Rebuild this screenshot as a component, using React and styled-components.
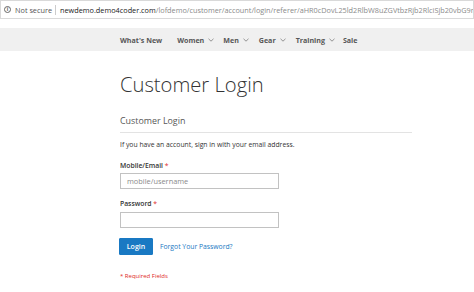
import React from "react";
import styled, { createGlobalStyle } from "styled-components";

const Global = createGlobalStyle`
  html, body { margin: 0; padding: 0; background: #fff; }
  body { font-family: "Open Sans", "Liberation Sans", sans-serif; color: #333; }
  * { box-sizing: border-box; }
`;

const AddressBar = styled.div`
  height: 19px;
  border: 1px solid #d9d9d9;
  display: flex;
  align-items: center;
  padding: 0 3px;
  font-size: 7.3px;
  white-space: nowrap;
  overflow: hidden;
  color: #555;
`;

const InfoIcon = styled.span`
  width: 7px;
  height: 7px;
  border: 1px solid #666;
  border-radius: 50%;
  font-size: 5px;
  line-height: 5px;
  text-align: center;
  font-weight: 700;
  color: #555;
  margin-right: 4px;
  flex: none;
`;

const Sep = styled.span`
  width: 1px;
  height: 10px;
  background: #ccc;
  margin: 0 4px 0 3px;
  flex: none;
`;

const Domain = styled.span`
  color: #222;
`;
const Path = styled.span`
  color: #8a8a8a;
`;

const Nav = styled.nav`
  margin-top: 9px;
  height: 23px;
  background: #f0f0f0;
  display: flex;
  align-items: center;
  padding-left: 120px;
  font-size: 7.1px;
  font-weight: 700;
  color: #575757;
`;

const NavItem = styled.span`
  display: flex;
  align-items: center;
  margin-right: ${(p) => p.$gap}px;
`;

const Chevron = () => (
  <svg width="6" height="4" viewBox="0 0 6 4" style={{ marginLeft: 4 }}>
    <path d="M0.5 0.8 L3 3.2 L5.5 0.8" fill="none" stroke="#888" strokeWidth="0.9" />
  </svg>
);

const Main = styled.main`
  padding-left: 120px;
  width: 412px;
`;

const Title = styled.h1`
  margin: 18px 0 0;
  font-size: 20.2px;
  font-weight: 300;
  line-height: 30px;
  color: #333;
`;

const BlockTitle = styled.h2`
  margin: 15px 0 0;
  font-size: 8.9px;
  font-weight: 400;
  line-height: 14px;
  padding-bottom: 4px;
  border-bottom: 1px solid #e3e3e3;
  color: #575757;
`;

const Note = styled.p`
  margin: 7px 0 0;
  font-size: 6.8px;
  line-height: 10px;
  color: #333;
`;

const Label = styled.label`
  display: block;
  margin-top: ${(p) => p.$top}px;
  font-size: 6.8px;
  font-weight: 600;
  line-height: 10px;
  color: #333;
  &::after {
    content: " *";
    color: #e02b27;
    font-weight: 400;
  }
`;

const Input = styled.input`
  display: block;
  margin-top: ${(p) => p.$top}px;
  width: 159px;
  height: 16px;
  border: 1px solid #c2c2c2;
  padding: 0 6px;
  font-family: inherit;
  font-size: 7.4px;
  color: #333;
  outline: none;
  &::placeholder { color: #8a8a8a; }
`;

const Actions = styled.div`
  display: flex;
  align-items: center;
  margin-top: 10px;
`;

const Button = styled.button`
  width: 34px;
  height: 17px;
  background: #1979c3;
  border: 1px solid #1979c3;
  border-radius: 1px;
  color: #fff;
  font-family: inherit;
  font-size: 7px;
  font-weight: 600;
  padding: 0;
  margin-left: -1px;
`;

const Link = styled.a`
  margin-left: 7px;
  font-size: 6.8px;
  color: #1979c3;
  text-decoration: none;
`;

const Required = styled.div`
  margin-top: 17px;
  font-size: 6px;
  line-height: 8px;
  color: #e02b27;
`;

export default function App() {
  return (
    <>
      <Global />
      <AddressBar>
        <InfoIcon>i</InfoIcon>
        <span>Not secure</span>
        <Sep />
        <Domain>newdemo.demo4coder.com</Domain>
        <Path>/lofdemo/customer/account/login/referer/aHR0cDovL25ld2RlbW8uZGVtbzRjb2RlciSjb20vbG9mZGVtby9jdC9jdXN0b21lci9hY2NvdW50</Path>
      </AddressBar>
      <Nav>
        <NavItem $gap={15}>What's New</NavItem>
        <NavItem $gap={9}>Women<Chevron /></NavItem>
        <NavItem $gap={10}>Men<Chevron /></NavItem>
        <NavItem $gap={10}>Gear<Chevron /></NavItem>
        <NavItem $gap={8}>Training<Chevron /></NavItem>
        <NavItem $gap={0}>Sale</NavItem>
      </Nav>
      <Main>
        <Title>Customer Login</Title>
        <BlockTitle>Customer Login</BlockTitle>
        <Note>If you have an account, sign in with your email address.</Note>
        <Label $top={11}>Mobile/Email</Label>
        <Input $top={2} placeholder="mobile/username" />
        <Label $top={10}>Password</Label>
        <Input $top={3} type="password" />
        <Actions>
          <Button>Login</Button>
          <Link href="#">Forgot Your Password?</Link>
        </Actions>
        <Required>* Required Fields</Required>
      </Main>
    </>
  );
}
